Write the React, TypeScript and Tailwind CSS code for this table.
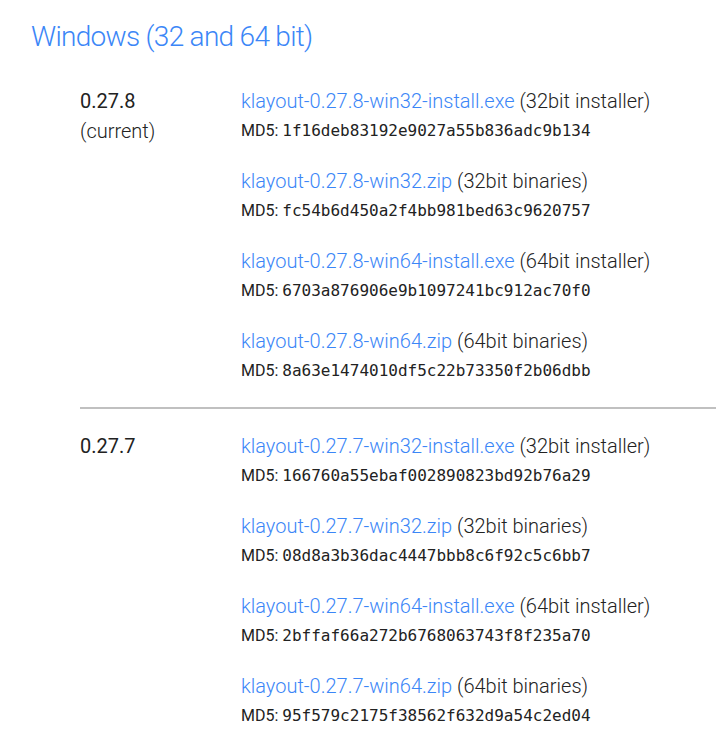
import React from 'react';

type Item = { file: string; note: string; md5: string };
type Release = { version: string; current?: boolean; items: Item[] };

const releases: Release[] = [
  {
    version: '0.27.8',
    current: true,
    items: [
      { file: 'klayout-0.27.8-win32-install.exe', note: '(32bit installer)', md5: '1f16deb83192e9027a55b836adc9b134' },
      { file: 'klayout-0.27.8-win32.zip', note: '(32bit binaries)', md5: 'fc54b6d450a2f4bb981bed63c9620757' },
      { file: 'klayout-0.27.8-win64-install.exe', note: '(64bit installer)', md5: '6703a876906e9b1097241bc912ac70f0' },
      { file: 'klayout-0.27.8-win64.zip', note: '(64bit binaries)', md5: '8a63e1474010df5c22b73350f2b06dbb' },
    ],
  },
  {
    version: '0.27.7',
    items: [
      { file: 'klayout-0.27.7-win32-install.exe', note: '(32bit installer)', md5: '166760a55ebaf002890823bd92b76a29' },
      { file: 'klayout-0.27.7-win32.zip', note: '(32bit binaries)', md5: '08d8a3b36dac4447bbb8c6f92c5c6bb7' },
      { file: 'klayout-0.27.7-win64-install.exe', note: '(64bit installer)', md5: '2bffaf66a272b6768063743f8f235a70' },
      { file: 'klayout-0.27.7-win64.zip', note: '(64bit binaries)', md5: '95f579c2175f38562f632d9a54c2ed04' },
    ],
  },
];

function ReleaseRow({ release, first }: { release: Release; first: boolean }) {
  return (
    <div className={first ? 'flex' : 'flex border-t-2 border-[#c0c0c0] pt-[22px]'}>
      <div className="w-[161px] shrink-0 text-[20px] leading-[30px] text-[#222]">
        <div>{release.version}</div>
        {release.current && <div className="font-light">(current)</div>}
      </div>
      <div className="flex flex-col gap-[20px] pb-[21px]">
        {release.items.map((it) => (
          <div key={it.file}>
            <div className="text-[20px] leading-[30px] font-light text-[#222]">
              <a href="#" className="text-[#3b86f7]">{it.file}</a> {it.note}
            </div>
            <div className="text-[16px] leading-[30px] text-[#222]">
              MD5:{' '}
              <span style={{ fontFamily: '"DejaVu Sans Mono", monospace' }}>
                {it.md5}
              </span>
            </div>
          </div>
        ))}
      </div>
    </div>
  );
}

export default function App() {
  return (
    <div className="min-h-screen bg-white pt-[19px]" style={{ fontFamily: 'Roboto, "Liberation Sans", sans-serif' }}>
      <h2 className="pl-[31px] text-[28px] leading-[36px] font-light tracking-[-0.7px] text-[#3b86f7]">Windows (32 and 64 bit)</h2>
      <div className="mt-[31px] ml-[80px] mr-[2px]">
        {releases.map((r, i) => (
          <ReleaseRow key={r.version} release={r} first={i === 0} />
        ))}
      </div>
    </div>
  );
}
